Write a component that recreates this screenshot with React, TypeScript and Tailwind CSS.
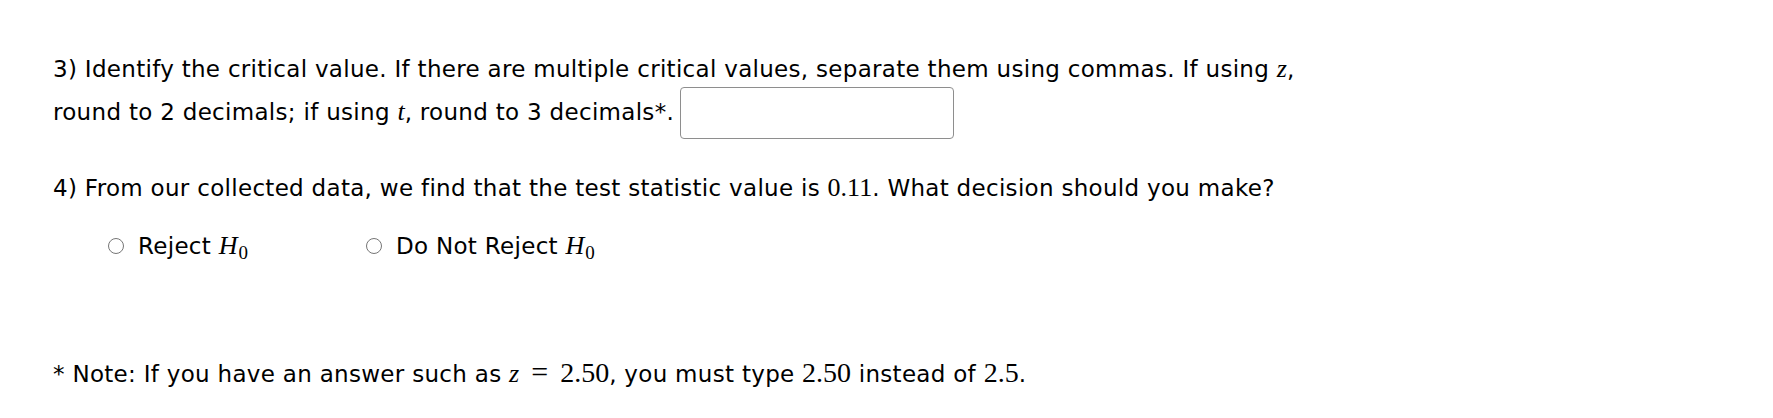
import React from 'react'

const sans = "font-['DejaVu_Sans','Noto_Sans',sans-serif]"
const serif = "font-['Liberation_Serif','DejaVu_Serif',serif] tracking-normal"

function MI({ children }: { children: React.ReactNode }) {
  return <span className={`${serif} text-[26px] italic`}>{children}</span>
}

function MN({ children, className = 'text-[26px]' }: { children: React.ReactNode; className?: string }) {
  return <span className={`${serif} ${className}`}>{children}</span>
}

function H0() {
  return (
    <span className={`${serif} text-[26px] italic`}>
      H<sub className="not-italic text-[19px] relative top-[5px] align-baseline ml-[1px]">0</sub>
    </span>
  )
}

function Radio({ label, className = '' }: { label: React.ReactNode; className?: string }) {
  return (
    <label className={`flex items-center ${className}`}>
      <span className="w-4 h-4 rounded-full border-[1.5px] border-[#767676] bg-white shrink-0" />
      <span className="ml-[14px]">{label}</span>
    </label>
  )
}

export default function App() {
  return (
    <div className={`w-[1773px] h-[418px] bg-white text-black ${sans} text-[23px] leading-[26px] tracking-[0.3px] pl-[53px] pt-[56px]`}>
      {/* 3) critical value */}
      <div className="whitespace-nowrap">
        3) Identify the critical value. If there are multiple critical values, separate them using commas. If using <MI>z</MI>,
      </div>
      <div className="flex items-start mt-[5px]">
        <span className="mt-[12px] whitespace-nowrap">
          round to 2 decimals; if using <MI>t</MI>, round to 3 decimals*.
        </span>
        <input
          type="text"
          className="ml-[6px] w-[274px] h-[52px] border border-[#8e8e8e] rounded-[4px] outline-none"
        />
      </div>

      {/* 4) decision */}
      <div className="mt-[36px] whitespace-nowrap">
        4) From our collected data, we find that the test statistic value is <MN>0.11</MN>. What decision should you make?
      </div>
      <div className="flex items-center mt-[32px] ml-[55px]">
        <Radio className="w-[258px]" label={<>Reject <H0 /></>} />
        <Radio label={<>Do Not Reject <H0 /></>} />
      </div>

      {/* note */}
      <div className="mt-[100px] whitespace-nowrap">
        * Note: If you have an answer such as <MI>z</MI>
        <MN className="text-[30px] mx-[12px]">=</MN>
        <MN className="text-[28px]">2.50</MN>, you must type <MN className="text-[28px]">2.50</MN> instead of{' '}
        <MN className="text-[28px]">2.5</MN>.
      </div>
    </div>
  )
}
